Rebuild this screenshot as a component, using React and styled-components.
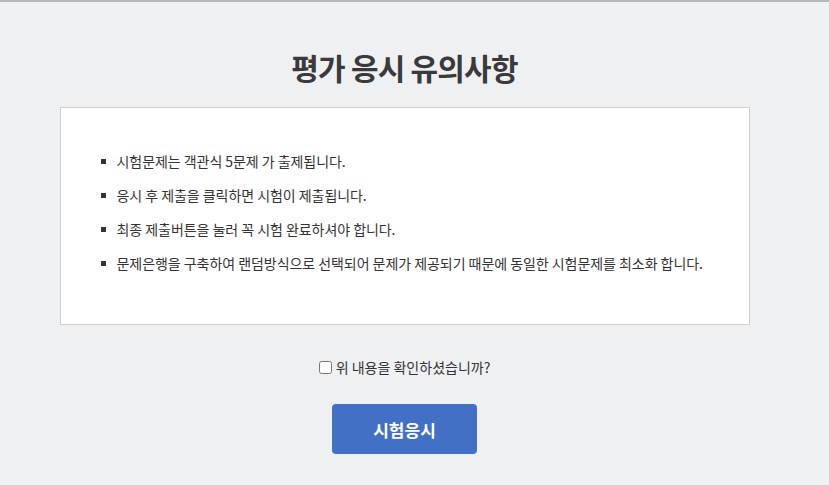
import React from "react";
import styled, { createGlobalStyle } from "styled-components";

const Global = createGlobalStyle`
  html, body { margin: 0; padding: 0; background: #eff0f2; }
  body { font-family: "Noto Sans CJK KR", "Noto Sans", sans-serif; color: #333; }
`;

const Page = styled.div`
  min-height: 485px;
  box-sizing: border-box;
  border-top: 2px solid #b8b8b8;
  padding: 0 20px 0 0;
  display: flex;
  flex-direction: column;
  align-items: center;
`;

const Title = styled.h1`
  margin: 43px 0 0;
  font-size: 30px;
  font-weight: 700;
  line-height: 44px;
  color: #3a3a3a;
  letter-spacing: -0.8px;
`;

const NoticeBox = styled.div`
  margin-top: 18px;
  width: 690px;
  height: 218px;
  box-sizing: border-box;
  background: #fff;
  border: 1px solid #cfcfcf;
  padding: 36px 40px 0 40px;
`;

const List = styled.ul`
  margin: 0;
  padding: 0;
  list-style: none;
`;

const Item = styled.li`
  position: relative;
  padding-left: 16px;
  font-size: 14px;
  line-height: 34px;
  color: #333;
  letter-spacing: -0.05px;
  &::before {
    content: "";
    position: absolute;
    left: 0;
    top: 15px;
    width: 5px;
    height: 5px;
    background: #333;
  }
`;

const Confirm = styled.label`
  margin-top: 32px;
  display: flex;
  align-items: center;
  gap: 2px;
  font-size: 14px;
  color: #333;
  cursor: pointer;
`;

const Check = styled.input`
  margin: 0 2px 0 0;
  width: 13px;
  height: 13px;
`;

const StartButton = styled.button`
  margin-top: 27px;
  width: 145px;
  height: 50px;
  border: none;
  border-radius: 4px;
  background: #4170c4;
  color: #fff;
  font-family: inherit;
  font-size: 17px;
  font-weight: 700;
  cursor: pointer;
`;

const items = [
  "시험문제는 객관식 5문제 가 출제됩니다.",
  "응시 후 제출을 클릭하면 시험이 제출됩니다.",
  "최종 제출버튼을 눌러 꼭 시험 완료하셔야 합니다.",
  "문제은행을 구축하여 랜덤방식으로 선택되어 문제가 제공되기 때문에 동일한 시험문제를 최소화 합니다.",
];

export default function App() {
  return (
    <>
      <Global />
      <Page>
        <Title>평가 응시 유의사항</Title>
        <NoticeBox>
          <List>
            {items.map((t) => (
              <Item key={t}>{t}</Item>
            ))}
          </List>
        </NoticeBox>
        <Confirm>
          <Check type="checkbox" />
          위 내용을 확인하셨습니까?
        </Confirm>
        <StartButton>시험응시</StartButton>
      </Page>
    </>
  );
}
